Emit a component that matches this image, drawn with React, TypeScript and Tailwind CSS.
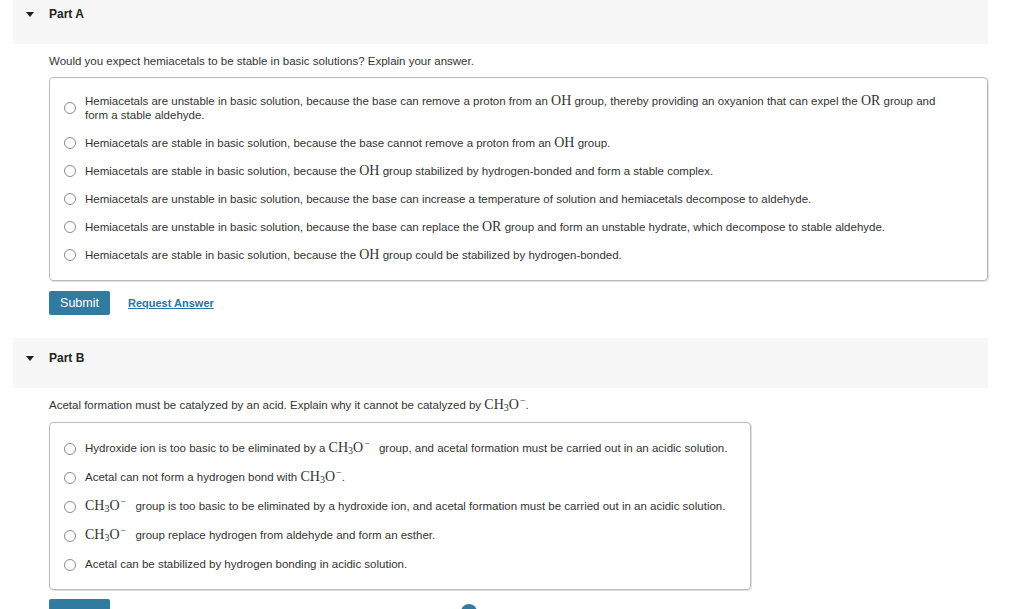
import type { ReactNode } from 'react';

const sans = { fontFamily: '"Liberation Sans", Arial, Helvetica, sans-serif' };

function M({ children }: { children: ReactNode }) {
  return <span className="font-['Liberation_Serif',serif] text-[14px] leading-none">{children}</span>;
}

function CH3O({ gap = true }: { gap?: boolean }) {
  return (
    <span className="font-['Liberation_Serif',serif] text-[14px] leading-none whitespace-nowrap">
      CH<sub className="text-[10px] -bottom-[2px]">3</sub>O
      <sup className={`text-[10px] -top-[5px] pl-[1px] ${gap ? 'pr-[6px]' : ''}`}>−</sup>
    </span>
  );
}

function Radio() {
  return <span className="w-[12px] h-[12px] shrink-0 rounded-full border border-[#8a8a8a] bg-white" />;
}

function Option({ children, lh, pr = 'pr-[20px]' }: { children: ReactNode; lh: string; pr?: string }) {
  return (
    <label className={`flex items-center gap-[9px] py-[7px] pl-[14px] ${pr} ${lh}`}>
      <Radio />
      <span>{children}</span>
    </label>
  );
}

function PartHeader({ title }: { title: string }) {
  return (
    <div className="ml-[13px] mr-[36px] h-[50px] bg-[#f7f7f7] flex items-start pt-[13px] pl-[13px] leading-[14px]">
      <span className="mt-[5px] w-0 h-0 border-l-[4.5px] border-r-[4.5px] border-t-[5px] border-l-transparent border-r-transparent border-t-[#222]" />
      <span className="ml-[15px] text-[12px] font-bold text-[#222]">{title}</span>
    </div>
  );
}

function Buttons() {
  return (
    <div className="flex items-center gap-[18px] mt-[10px]">
      <button className="h-[24px] w-[61px] rounded-[2px] bg-[#307b9f] text-white text-[12.5px] font-medium">Submit</button>
      <a className="text-[11px] font-bold text-[#2a74a0] underline">Request Answer</a>
    </div>
  );
}

export default function App() {
  return (
    <div className="relative w-[1024px] h-[609px] overflow-hidden bg-white text-[#333] text-[11.5px]" style={sans}>
      <div className="-mt-[6px]">
        <PartHeader title="Part A" />
        <div className="pl-[49px] pr-[36px]">
          <p className="mt-[10px] leading-[14px]">Would you expect hemiacetals to be stable in basic solutions? Explain your answer.</p>
          <div className="mt-[9px] w-[939px] rounded-[4px] border border-[#b9b9b9] shadow-[1px_1px_0_#e2e2e2] pt-[9px] pb-[11px]">
            <Option lh="leading-[14px]" pr="pr-[40px]">
              Hemiacetals are unstable in basic solution, because the base can remove a proton from an <M>OH</M> group, thereby providing an oxyanion that can expel the <M>OR</M> group and form a stable aldehyde.
            </Option>
            <Option lh="leading-[14px]">
              Hemiacetals are stable in basic solution, because the base cannot remove a proton from an <M>OH</M> group.
            </Option>
            <Option lh="leading-[14px]">
              Hemiacetals are stable in basic solution, because the <M>OH</M> group stabilized by hydrogen-bonded and form a stable complex.
            </Option>
            <Option lh="leading-[14px]">
              Hemiacetals are unstable in basic solution, because the base can increase a temperature of solution and hemiacetals decompose to aldehyde.
            </Option>
            <Option lh="leading-[14px]">
              Hemiacetals are unstable in basic solution, because the base can replace the <M>OR</M> group and form an unstable hydrate, which decompose to stable aldehyde.
            </Option>
            <Option lh="leading-[14px]">
              Hemiacetals are stable in basic solution, because the <M>OH</M> group could be stabilized by hydrogen-bonded.
            </Option>
          </div>
          <Buttons />
        </div>
      </div>

      <div className="mt-[23px]">
        <PartHeader title="Part B" />
        <div className="pl-[49px]">
          <p className="mt-[10px] leading-[14px]">
            Acetal formation must be catalyzed by an acid. Explain why it cannot be catalyzed by <CH3O gap={false} />.
          </p>
          <div className="mt-[10px] w-[702px] rounded-[4px] border border-[#b9b9b9] shadow-[1px_1px_0_#e2e2e2] pt-[11px] pb-[10px]">
            <Option lh="leading-[15px]">
              Hydroxide ion is too basic to be eliminated by a <CH3O /> group, and acetal formation must be carried out in an acidic solution.
            </Option>
            <Option lh="leading-[15px]">
              Acetal can not form a hydrogen bond with <CH3O gap={false} />.
            </Option>
            <Option lh="leading-[15px]">
              <CH3O /> group is too basic to be eliminated by a hydroxide ion, and acetal formation must be carried out in an acidic solution.
            </Option>
            <Option lh="leading-[15px]">
              <CH3O /> group replace hydrogen from aldehyde and form an esther.
            </Option>
            <Option lh="leading-[15px]">
              Acetal can be stabilized by hydrogen bonding in acidic solution.
            </Option>
          </div>
          <div className="mt-[9px] h-[24px] w-[61px] rounded-[2px] bg-[#307b9f]" />
        </div>
      </div>

      <span className="absolute left-[461px] top-[604px] w-[16px] h-[16px] rounded-full bg-[#307b9f]" />
    </div>
  );
}
